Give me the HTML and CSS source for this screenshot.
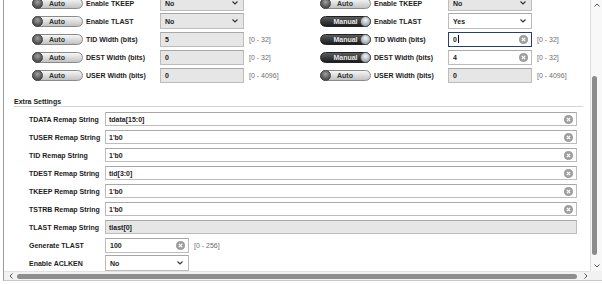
FILE: index.html
```html
<!DOCTYPE html>
<html lang="en">
<head>
    <meta charset="UTF-8">
    <title>AXI4-Stream Subset Converter</title>
    <link rel="stylesheet" href="styles.css">
</head>
<body>
<div class="frame">
    <div class="viewport">
        <div class="content">

            <!-- Interface signals -->
            <div class="ifrow">
                <div class="field">
                    <div class="toggle auto"><span class="knob"></span><span class="tt">Auto</span></div>
                    <span class="lbl">Enable TKEEP</span>
                    <div class="box sel off"><span class="v">No</span><svg class="chev" viewBox="0 0 6 4"><path d="M0.5 0.5 3 3 5.5 0.5" fill="none" stroke="#333" stroke-width="1.1"/></svg></div>
                </div>
                <div class="field">
                    <div class="toggle auto"><span class="knob"></span><span class="tt">Auto</span></div>
                    <span class="lbl">Enable TKEEP</span>
                    <div class="box sel off"><span class="v">No</span><svg class="chev" viewBox="0 0 6 4"><path d="M0.5 0.5 3 3 5.5 0.5" fill="none" stroke="#333" stroke-width="1.1"/></svg></div>
                </div>
            </div>
            <div class="ifrow">
                <div class="field">
                    <div class="toggle auto"><span class="knob"></span><span class="tt">Auto</span></div>
                    <span class="lbl">Enable TLAST</span>
                    <div class="box sel off"><span class="v">No</span><svg class="chev" viewBox="0 0 6 4"><path d="M0.5 0.5 3 3 5.5 0.5" fill="none" stroke="#333" stroke-width="1.1"/></svg></div>
                </div>
                <div class="field">
                    <div class="toggle manual"><span class="tt">Manual</span><span class="knob"></span></div>
                    <span class="lbl">Enable TLAST</span>
                    <div class="box sel"><span class="v">Yes</span><svg class="chev" viewBox="0 0 6 4"><path d="M0.5 0.5 3 3 5.5 0.5" fill="none" stroke="#333" stroke-width="1.1"/></svg></div>
                </div>
            </div>
            <div class="ifrow">
                <div class="field">
                    <div class="toggle auto"><span class="knob"></span><span class="tt">Auto</span></div>
                    <span class="lbl">TID Width (bits)</span>
                    <div class="box off"><span class="v">5</span></div>
                    <span class="range">[0 - 32]</span>
                </div>
                <div class="field">
                    <div class="toggle manual"><span class="tt">Manual</span><span class="knob"></span></div>
                    <span class="lbl">TID Width (bits)</span>
                    <div class="box focus"><span class="v">0<span class="caret"></span></span><svg class="clr" viewBox="0 0 10 10"><circle cx="5" cy="5" r="4.5" fill="#a2a2a2" stroke="#8a8a8a" stroke-width="0.8"/><path d="M3.2 3.2 6.8 6.8 M6.8 3.2 3.2 6.8" stroke="#fff" stroke-width="1.3"/></svg></div>
                    <span class="range">[0 - 32]</span>
                </div>
            </div>
            <div class="ifrow">
                <div class="field">
                    <div class="toggle auto"><span class="knob"></span><span class="tt">Auto</span></div>
                    <span class="lbl">DEST Width (bits)</span>
                    <div class="box off"><span class="v">0</span></div>
                    <span class="range">[0 - 32]</span>
                </div>
                <div class="field">
                    <div class="toggle manual"><span class="tt">Manual</span><span class="knob"></span></div>
                    <span class="lbl">DEST Width (bits)</span>
                    <div class="box"><span class="v">4</span><svg class="clr" viewBox="0 0 10 10"><circle cx="5" cy="5" r="4.5" fill="#a2a2a2" stroke="#8a8a8a" stroke-width="0.8"/><path d="M3.2 3.2 6.8 6.8 M6.8 3.2 3.2 6.8" stroke="#fff" stroke-width="1.3"/></svg></div>
                    <span class="range">[0 - 32]</span>
                </div>
            </div>
            <div class="ifrow">
                <div class="field">
                    <div class="toggle auto"><span class="knob"></span><span class="tt">Auto</span></div>
                    <span class="lbl">USER Width (bits)</span>
                    <div class="box off"><span class="v">0</span></div>
                    <span class="range">[0 - 4096]</span>
                </div>
                <div class="field">
                    <div class="toggle auto"><span class="knob"></span><span class="tt">Auto</span></div>
                    <span class="lbl">USER Width (bits)</span>
                    <div class="box off"><span class="v">0</span></div>
                    <span class="range">[0 - 4096]</span>
                </div>
            </div>

            <!-- Extra Settings -->
            <h3 class="sec-title">Extra Settings</h3>
            <div class="remap">
                <div class="rrow">
                    <span class="lbl2">TDATA Remap String</span>
                    <div class="box wide"><span class="v">tdata[15:0]</span><svg class="clr" viewBox="0 0 10 10"><circle cx="5" cy="5" r="4.5" fill="#a2a2a2" stroke="#8a8a8a" stroke-width="0.8"/><path d="M3.2 3.2 6.8 6.8 M6.8 3.2 3.2 6.8" stroke="#fff" stroke-width="1.3"/></svg></div>
                </div>
                <div class="rrow">
                    <span class="lbl2">TUSER Remap String</span>
                    <div class="box wide"><span class="v">1'b0</span><svg class="clr" viewBox="0 0 10 10"><circle cx="5" cy="5" r="4.5" fill="#a2a2a2" stroke="#8a8a8a" stroke-width="0.8"/><path d="M3.2 3.2 6.8 6.8 M6.8 3.2 3.2 6.8" stroke="#fff" stroke-width="1.3"/></svg></div>
                </div>
                <div class="rrow">
                    <span class="lbl2">TID Remap String</span>
                    <div class="box wide"><span class="v">1'b0</span><svg class="clr" viewBox="0 0 10 10"><circle cx="5" cy="5" r="4.5" fill="#a2a2a2" stroke="#8a8a8a" stroke-width="0.8"/><path d="M3.2 3.2 6.8 6.8 M6.8 3.2 3.2 6.8" stroke="#fff" stroke-width="1.3"/></svg></div>
                </div>
                <div class="rrow">
                    <span class="lbl2">TDEST Remap String</span>
                    <div class="box wide"><span class="v">tid[3:0]</span><svg class="clr" viewBox="0 0 10 10"><circle cx="5" cy="5" r="4.5" fill="#a2a2a2" stroke="#8a8a8a" stroke-width="0.8"/><path d="M3.2 3.2 6.8 6.8 M6.8 3.2 3.2 6.8" stroke="#fff" stroke-width="1.3"/></svg></div>
                </div>
                <div class="rrow">
                    <span class="lbl2">TKEEP Remap String</span>
                    <div class="box wide"><span class="v">1'b0</span><svg class="clr" viewBox="0 0 10 10"><circle cx="5" cy="5" r="4.5" fill="#a2a2a2" stroke="#8a8a8a" stroke-width="0.8"/><path d="M3.2 3.2 6.8 6.8 M6.8 3.2 3.2 6.8" stroke="#fff" stroke-width="1.3"/></svg></div>
                </div>
                <div class="rrow">
                    <span class="lbl2">TSTRB Remap String</span>
                    <div class="box wide"><span class="v">1'b0</span><svg class="clr" viewBox="0 0 10 10"><circle cx="5" cy="5" r="4.5" fill="#a2a2a2" stroke="#8a8a8a" stroke-width="0.8"/><path d="M3.2 3.2 6.8 6.8 M6.8 3.2 3.2 6.8" stroke="#fff" stroke-width="1.3"/></svg></div>
                </div>
                <div class="rrow">
                    <span class="lbl2">TLAST Remap String</span>
                    <div class="box wide off"><span class="v">tlast[0]</span></div>
                </div>
                <div class="rrow">
                    <span class="lbl2">Generate TLAST</span>
                    <div class="box"><span class="v">100</span><svg class="clr" viewBox="0 0 10 10"><circle cx="5" cy="5" r="4.5" fill="#a2a2a2" stroke="#8a8a8a" stroke-width="0.8"/><path d="M3.2 3.2 6.8 6.8 M6.8 3.2 3.2 6.8" stroke="#fff" stroke-width="1.3"/></svg></div>
                    <span class="range">[0 - 256]</span>
                </div>
                <div class="rrow">
                    <span class="lbl2">Enable ACLKEN</span>
                    <div class="box sel"><span class="v">No</span><svg class="chev" viewBox="0 0 6 4"><path d="M0.5 0.5 3 3 5.5 0.5" fill="none" stroke="#333" stroke-width="1.1"/></svg></div>
                </div>
            </div>
        </div>
    </div>

    <!-- Scrollbars -->
    <div class="vscroll">
        <svg class="arr" viewBox="0 0 6 4"><path d="M0.5 3.5 3 1 5.5 3.5" fill="none" stroke="#555" stroke-width="1"/></svg>
        <div class="vtrack"><div class="vthumb"></div></div>
        <svg class="arr" viewBox="0 0 6 4"><path d="M0.5 0.5 3 3 5.5 0.5" fill="none" stroke="#555" stroke-width="1"/></svg>
    </div>
    <div class="hscroll">
        <svg class="harr" viewBox="0 0 4 6"><path d="M3.5 0.5 1 3 3.5 5.5" fill="none" stroke="#555" stroke-width="1"/></svg>
        <div class="hthumb"></div>
        <svg class="harr right" viewBox="0 0 4 6"><path d="M0.5 0.5 3 3 0.5 5.5" fill="none" stroke="#555" stroke-width="1"/></svg>
    </div>
    <div class="corner"></div>
</div>
</body>
</html>
```

FILE: styles.css
```css
* {
    box-sizing: border-box;
}
body {
    margin: 0;
    background: #fff;
    font-family: "Liberation Sans", Arial, sans-serif;
    font-size: 7px;
    font-weight: bold;
    color: #1c1c1c;
}
.frame {
    margin-left: 3px;
    width: 599px;
    height: 281px;
    border-left: 1px solid #9c9c9c;
    border-bottom: 1px solid #c8c8c8;
    display: grid;
    grid-template-columns: 586px 12px;
    grid-template-rows: 271px 9px;
}
.viewport {
    overflow: hidden;
}
.content {
    margin-top: -6px;
}

/* interface rows */
.ifrow {
    display: grid;
    grid-template-columns: 288px 288px;
    height: 18px;
    padding-left: 28px;
}
.field {
    display: flex;
    align-items: center;
}
.toggle {
    width: 51px;
    height: 11px;
    margin-right: 3px;
    border-radius: 6px;
    display: flex;
    align-items: center;
    line-height: 9px;
}
.toggle .tt {
    flex: 1;
    text-align: center;
}
.knob {
    flex: none;
    width: 11px;
    height: 11px;
    margin: -1px;
    border-radius: 50%;
}
.toggle.auto {
    background: linear-gradient(#f7f7f7, #c2c2c2);
    border: 1px solid #8a8a8a;
    color: #333;
}
.toggle.auto .tt {
    padding-right: 10px;
}
.toggle.auto .knob {
    background: radial-gradient(circle at 50% 35%, #a0a0a0, #4a4a4a 75%);
    border: 1px solid #444;
}
.toggle.manual {
    background: linear-gradient(#5c5c5c, #1c1c1c);
    border: 1px solid #222;
    color: #e6e6e6;
}
.toggle.manual .tt {
    padding-left: 9px;
}
.toggle.manual .knob {
    background: radial-gradient(circle at 50% 35%, #f2f5f8, #9ba4ac 75%);
    border: 1px solid #555;
}
.lbl {
    width: 74px;
}

/* inputs */
.box {
    width: 84px;
    height: 15px;
    border: 1px solid #bcbcbc;
    border-top-color: #a8a8a8;
    background: #fff;
    display: flex;
    align-items: center;
    padding: 0 3px 0 4px;
}
.box .v {
    flex: 1;
    white-space: nowrap;
}
.box.off {
    background: #e6e6e6;
}
.box.sel {
    height: 16px;
    padding-right: 5px;
}
.box.focus {
    border-color: #22407c;
}
.caret {
    display: inline-block;
    width: 1px;
    height: 8px;
    margin-left: 1px;
    background: #000;
    vertical-align: -1px;
}
.chev {
    width: 6px;
    height: 4px;
}
.clr {
    width: 9px;
    height: 9px;
}
.range {
    margin-left: 5px;
    font-weight: normal;
    color: #6e6e6e;
}

/* extra settings */
.sec-title {
    margin: 13px 0 0 10px;
    width: 569px;
    font-size: 7px;
    line-height: 9px;
    border-bottom: 1px solid #d4d4d4;
}
.remap {
    margin-top: 3px;
    padding-left: 25px;
}
.rrow {
    height: 18px;
    display: flex;
    align-items: center;
}
.lbl2 {
    width: 76px;
}
.box.wide {
    width: 472px;
    height: 14px;
    padding-left: 3px;
}

/* scrollbars */
.vscroll {
    border-left: 1px solid #dcdcdc;
    background: #f8f8f8;
    display: flex;
    flex-direction: column;
    align-items: center;
}
.arr {
    width: 6px;
    height: 4px;
    margin: 3px 0;
}
.vtrack {
    flex: 1;
    width: 100%;
    padding-top: 66px;
    padding-bottom: 6px;
}
.vthumb {
    width: 5px;
    height: 179px;
    margin-left: 1px;
    border-radius: 3px;
    background: #8c8c8c;
}
.hscroll {
    background: #f2f2f2;
    border-top: 1px solid #e2e2e2;
    display: flex;
    align-items: center;
}
.harr {
    width: 4px;
    height: 6px;
    margin: 0 4px 0 5px;
}
.harr.right {
    margin: 0 0 0 auto;
    margin-right: 2px;
}
.hthumb {
    width: 560px;
    height: 5px;
    border-radius: 3px;
    background: #8e8e8e;
}
.corner {
    background: #f2f2f2;
}
```
